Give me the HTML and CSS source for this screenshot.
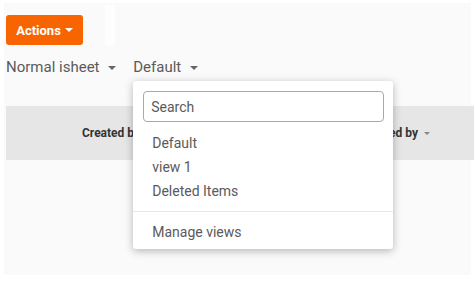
FILE: index.html
```html
<!DOCTYPE html>
<html lang="en">
<head>
  <meta charset="UTF-8" />
  <title>Sheet views</title>
  <link rel="stylesheet" href="styles.css">
</head>
<body>
  <div class="panel">
    <div class="toolbar">
      <button class="actions">Actions <span class="caret"></span></button>
      <span class="blank"></span>
    </div>

    <div class="views">
      <span class="picker">Normal isheet <span class="caret"></span></span>
      <span class="picker view-select">Default <span class="caret"></span>
        <div class="menu">
          <input type="text" class="search" placeholder="Search" />
          <a href="#" class="item">Default</a>
          <a href="#" class="item">view 1</a>
          <a href="#" class="item">Deleted Items</a>
          <div class="divider"></div>
          <a href="#" class="item">Manage views</a>
        </div>
      </span>
    </div>

    <div class="table-head">
      <div class="col">Created by <span class="caret small"></span></div>
      <div class="col">Modified by <span class="caret small"></span></div>
    </div>
  </div>
</body>
</html>
```

FILE: styles.css
```css
* {
  margin: 0;
  padding: 0;
  box-sizing: border-box;
}

body {
  background: #fff;
  font-family: Roboto, "Liberation Sans", Arial, sans-serif;
  color: #555;
  overflow: hidden;
}

.panel {
  margin: 3px 3px 0 4px;
  height: 272px;
  background: #fafafa;
  padding: 12px 0 0 2px;
}

.toolbar {
  display: flex;
  align-items: stretch;
  height: 30px;
}

.actions {
  width: 77px;
  height: 30px;
  border: none;
  border-radius: 3px;
  background: #f86500;
  color: #fff;
  font-family: inherit;
  font-size: 13px;
  font-weight: bold;
  display: flex;
  align-items: center;
  justify-content: center;
  gap: 4px;
}

.blank {
  width: 10px;
  margin: -10px 0 0 22px;
  background: #fefefe;
}

.caret {
  display: inline-block;
  width: 0;
  height: 0;
  border-left: 4px solid transparent;
  border-right: 4px solid transparent;
  border-top: 4px solid #666;
  vertical-align: middle;
  margin-left: 5px;
}

.actions .caret {
  border-top-color: #fff;
  margin-left: 0;
}

.caret.small {
  border-left-width: 3.5px;
  border-right-width: 3.5px;
  border-top-width: 3.5px;
  border-top-color: #888;
  margin-left: 3px;
}

.views {
  display: flex;
  gap: 17px;
  margin-top: 12px;
  font-size: 15px;
  line-height: 20px;
  color: #5a5a5a;
}

.view-select {
  position: relative;
}

.menu {
  position: absolute;
  top: 24px;
  left: 0;
  width: 260px;
  background: #fff;
  border-radius: 3px;
  box-shadow: 0 2px 8px rgba(0, 0, 0, 0.28);
  padding: 10px 0 5px;
  z-index: 10;
  display: flex;
  flex-direction: column;
}

.search {
  margin: 0 9px 9px 10px;
  height: 31px;
  border: 1px solid #a9a9a9;
  border-radius: 4px;
  padding: 0 7px;
  font-family: inherit;
  font-size: 14px;
  color: #5a5a5a;
  background: #fff;
}

.search::placeholder {
  color: #5a5a5a;
}

.item {
  display: block;
  height: 24px;
  line-height: 24px;
  padding-left: 19px;
  font-size: 14px;
  color: #5a5a5a;
  text-decoration: none;
}

.divider {
  height: 1px;
  background: #e6e6e6;
  margin: 8px 0;
}

.table-head {
  display: flex;
  justify-content: space-between;
  align-items: center;
  margin: 29px -3px 0 0;
  height: 54px;
  background: #e6e6e6;
  padding: 0 44px 0 76px;
  font-size: 12px;
  font-weight: bold;
  color: #333;
}
```
